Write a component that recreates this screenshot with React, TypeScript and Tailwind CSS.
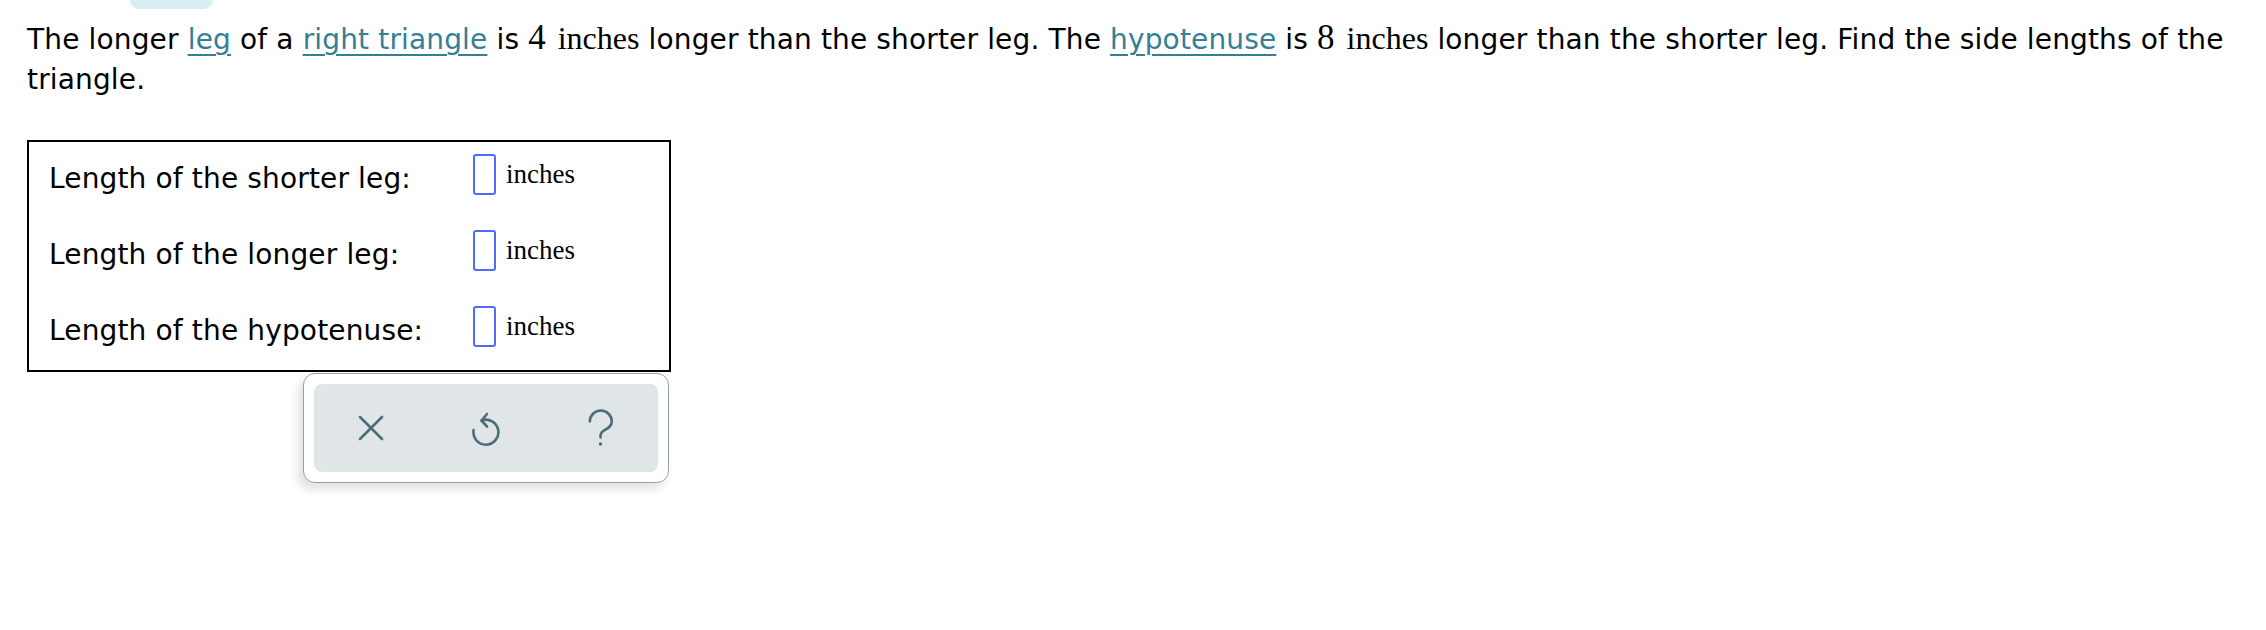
import React from "react";

const sans = { fontFamily: '"DejaVu Sans", Verdana, sans-serif' };

function Link({ children }: { children: React.ReactNode }) {
  return <span className="text-[#357f96] underline decoration-[1.5px] underline-offset-[5px]">{children}</span>;
}

function Num({ n }: { n: string }) {
  return (
    <span className="font-['Liberation_Serif',serif] leading-none tracking-normal">
      <span className="text-[35px]">{n}</span>
      <span className="ml-[12px] text-[32px]">inches</span>
    </span>
  );
}

const rows = ["Length of the shorter leg:", "Length of the longer leg:", "Length of the hypotenuse:"];

function XIcon() {
  return (
    <svg width="26" height="26" viewBox="0 0 26 26" fill="none" stroke="#4a6d7a" strokeWidth="2.6" strokeLinecap="round">
      <path d="M2 2L24 24M24 2L2 24" />
    </svg>
  );
}

function UndoIcon() {
  return (
    <svg width="28" height="36" viewBox="0 0 28 36" fill="none" stroke="#4a6d7a" strokeWidth="2.6" strokeLinecap="round" strokeLinejoin="round">
      <path d="M9.5 10.5A12.5 12.5 0 1 1 1.6 20" />
      <path d="M15 4L9.5 10.5L15 16.5" />
    </svg>
  );
}

function HelpIcon() {
  return (
    <svg width="26" height="38" viewBox="0 0 26 38" fill="none" stroke="#4a6d7a" strokeWidth="2.6" strokeLinecap="round">
      <path d="M1.8 12.5A11 11 0 0 1 23.8 12.5C23.8 17 20.5 19 16.5 21.2C13.5 22.8 12.5 24.5 12.5 27.5V28.5" />
      <circle cx="12.5" cy="35" r="1.7" fill="#4a6d7a" stroke="none" />
    </svg>
  );
}

export default function App() {
  return (
    <div className="relative h-[630px] w-[2266px] bg-white tracking-[0.15px] text-black" style={sans}>
      <div className="absolute left-[130px] top-0 h-[9px] w-[83px] rounded-b-[14px] bg-[#d6eef4]" />

      <div className="px-[27px] pt-[20px]">
        <p className="text-[28px] leading-[40px]">
          The longer <Link>leg</Link> of a <Link>right triangle</Link> is <Num n="4" /> longer than the shorter leg.
          The <Link>hypotenuse</Link> is <Num n="8" /> longer than the shorter leg. Find the side lengths of the
          triangle.
        </p>

        <div className="mt-[40px] w-[644px] border-2 border-black">
          {rows.map((label) => (
            <div key={label} className="flex h-[76px] items-start pl-[20px]">
              <div className="mt-[17px] w-[424px] text-[28px] leading-[40px]">{label}</div>
              <div className="mt-[12px] flex items-start gap-[10px]">
                <div className="h-[41px] w-[23px] rounded-[3px] border-2 border-[#4d6cff]" />
                <span className="mt-[2px] font-['Liberation_Serif',serif] text-[27px] leading-[36px] tracking-normal">
                  inches
                </span>
              </div>
            </div>
          ))}
        </div>

        <div className="ml-[276px] mt-[1px] w-[366px] rounded-[12px] border border-[#8fa2ab] bg-white p-[10px] shadow-[-5px_6px_10px_rgba(0,0,0,0.12)]">
          <div className="grid h-[88px] grid-cols-3 place-items-center rounded-[8px] bg-[#e0e5e8]">
            <XIcon />
            <UndoIcon />
            <HelpIcon />
          </div>
        </div>
      </div>
    </div>
  );
}
